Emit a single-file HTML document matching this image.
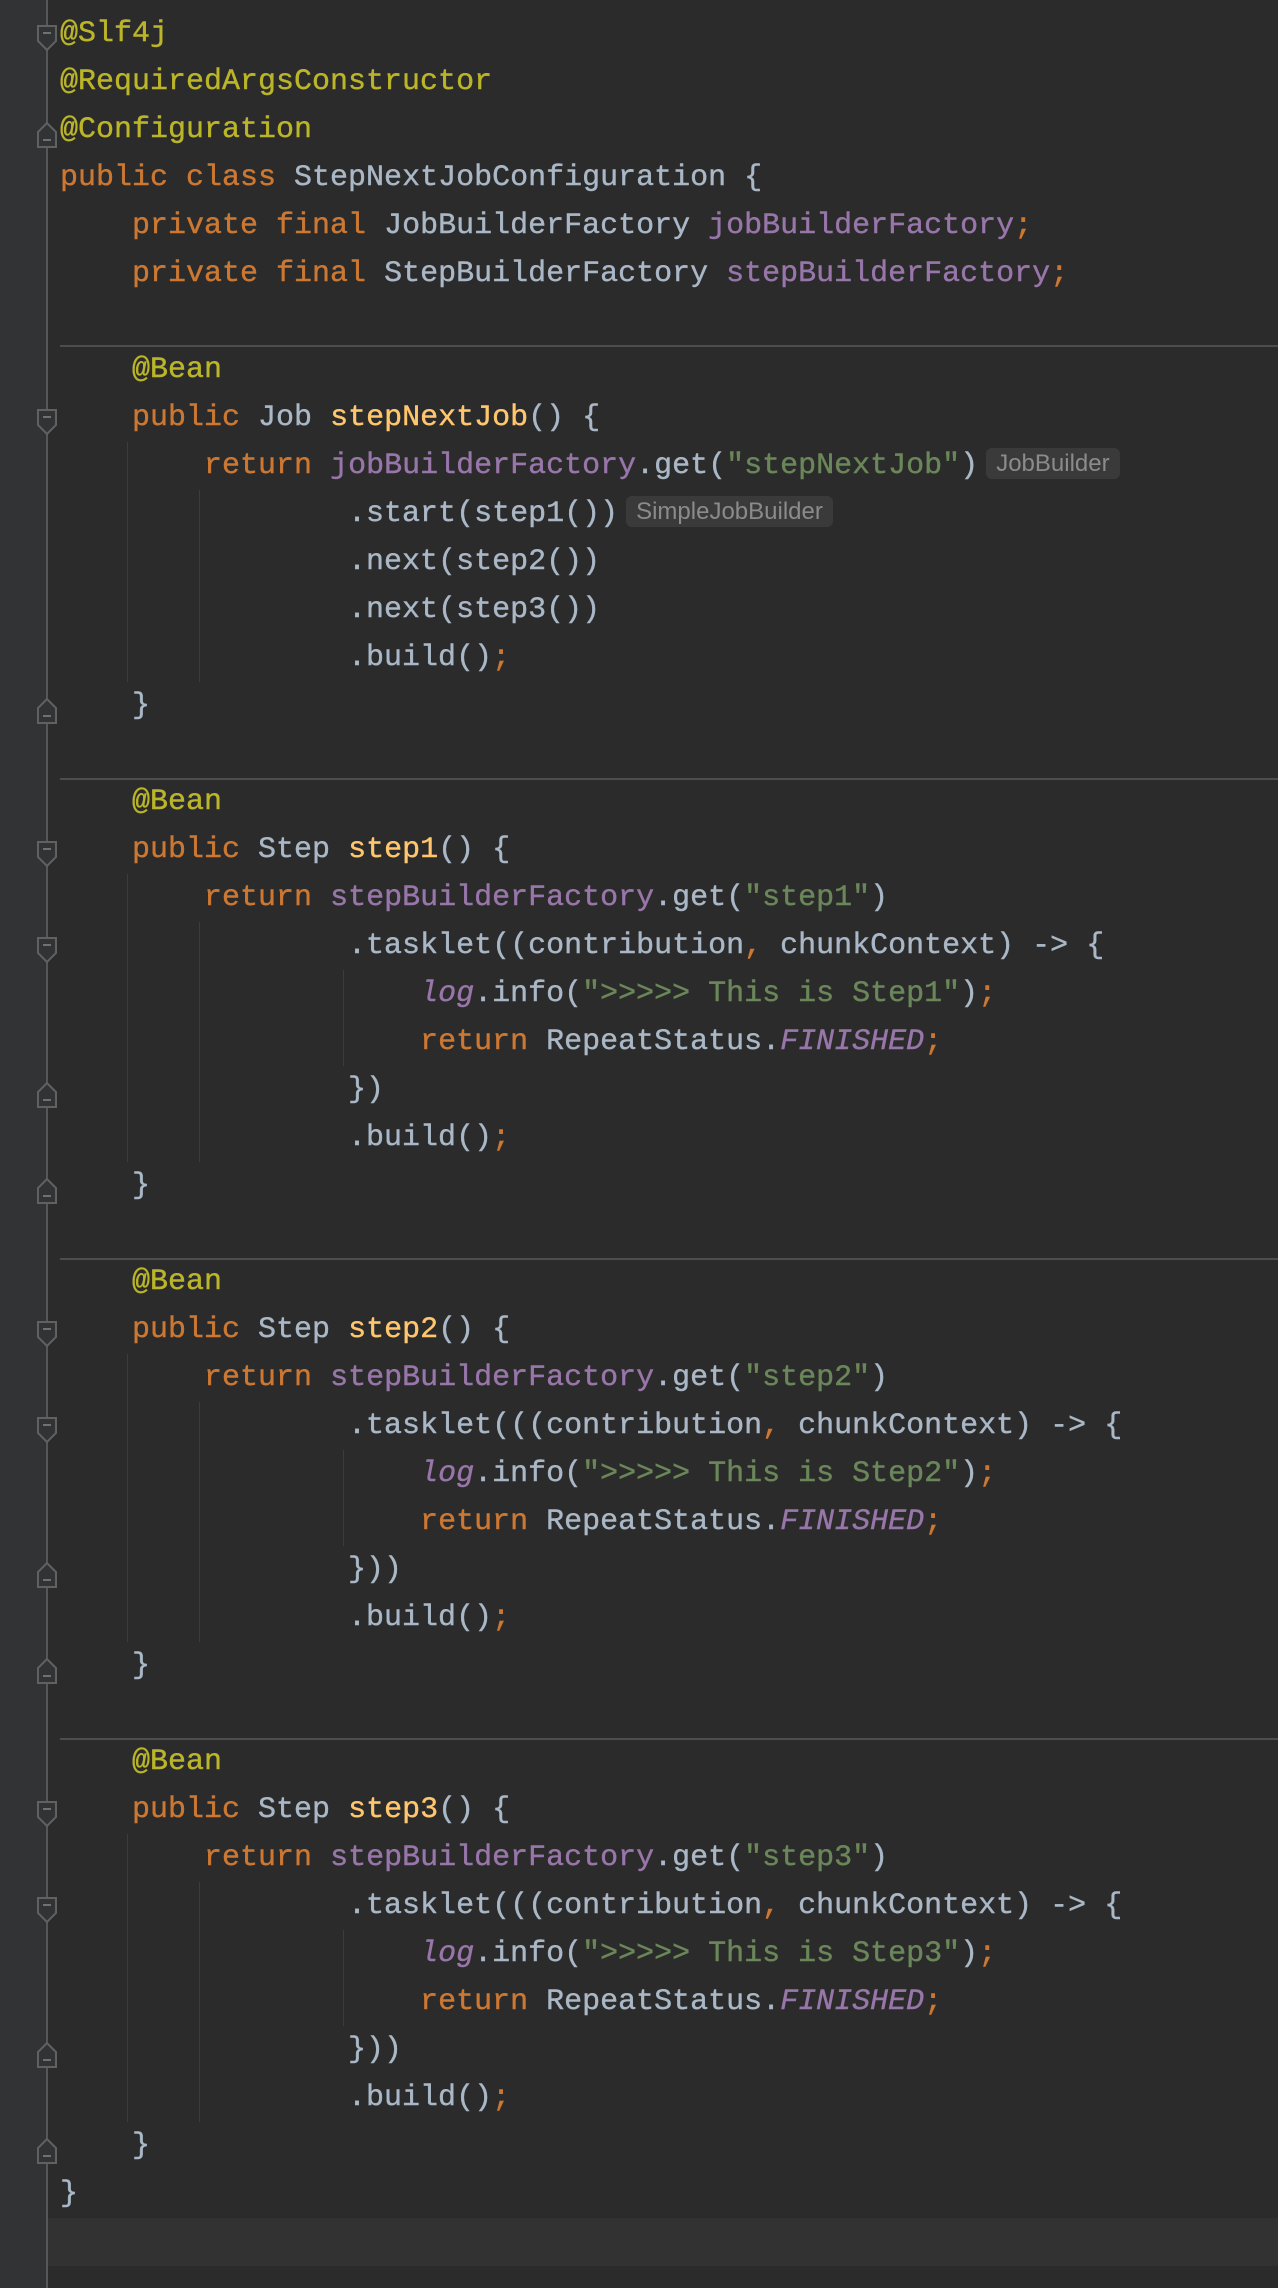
<!DOCTYPE html>
<html><head><meta charset="utf-8"><style>
html,body{margin:0;padding:0}
body{width:1278px;height:2288px;background:#2b2b2b;position:relative;overflow:hidden;font-family:"Liberation Mono",monospace;font-size:30px}
.g{position:absolute;left:0;top:0;width:46px;height:2288px;background:#313335}
.gl{position:absolute;left:46px;top:0;width:2px;height:2288px;background:#555759}
.l{position:absolute;left:60px;height:48px;line-height:48px;white-space:pre;color:#a9b7c6;-webkit-text-stroke:0.4px currentColor}
.k{color:#cc7832}.a{color:#bbb529}.f{color:#9876aa}.m{color:#ffc66d}.s{color:#6a8759}.i{font-style:italic;color:#9876aa}
.sep{position:absolute;left:60px;right:0;height:2px;background:#4d4d4d}
.ig{position:absolute;width:1px;background:#3c3c3c}
.h{display:inline-block;font-family:"Liberation Sans",sans-serif;font-size:24px;color:#8b8b8b;background:#3a3a3a;border-radius:6px;padding:0 10px;line-height:31px;vertical-align:2px;margin-left:8px;-webkit-text-stroke:0}
.cur{position:absolute;left:48px;right:0;top:2218px;height:48px;background:#323232}
</style></head><body>
<div class="g"></div>
<div class="cur"></div>
<div class="gl"></div>
<div class="sep" style="top:345px"></div>
<div class="sep" style="top:778px"></div>
<div class="sep" style="top:1258px"></div>
<div class="sep" style="top:1738px"></div>
<div class="ig" style="left:127px;top:442px;height:240px"></div>
<div class="ig" style="left:199px;top:490px;height:192px"></div>
<div class="ig" style="left:127px;top:874px;height:288px"></div>
<div class="ig" style="left:199px;top:922px;height:240px"></div>
<div class="ig" style="left:343px;top:970px;height:96px"></div>
<div class="ig" style="left:127px;top:1354px;height:288px"></div>
<div class="ig" style="left:199px;top:1402px;height:240px"></div>
<div class="ig" style="left:343px;top:1450px;height:96px"></div>
<div class="ig" style="left:127px;top:1834px;height:288px"></div>
<div class="ig" style="left:199px;top:1882px;height:240px"></div>
<div class="ig" style="left:343px;top:1930px;height:96px"></div>
<svg width="70" height="2288" style="position:absolute;left:0;top:0">
<defs>
<g id="s"><path d="M-9,-8 H9 V7 L0,16 L-9,7 Z" fill="#313335" stroke="#5f6163" stroke-width="2"/><path d="M-4,-1 H4" stroke="#6f7173" stroke-width="2"/></g>
<g id="e"><path d="M-9,17 H9 V2 L0,-7 L-9,2 Z" fill="#313335" stroke="#5f6163" stroke-width="2"/><path d="M-4,10 H4" stroke="#6f7173" stroke-width="2"/></g>
</defs>
<use href="#s" x="47" y="34"/><use href="#e" x="47" y="130"/>
<use href="#s" x="47" y="418"/><use href="#e" x="47" y="706"/>
<use href="#s" x="47" y="850"/><use href="#s" x="47" y="946"/><use href="#e" x="47" y="1090"/><use href="#e" x="47" y="1186"/>
<use href="#s" x="47" y="1330"/><use href="#s" x="47" y="1426"/><use href="#e" x="47" y="1570"/><use href="#e" x="47" y="1666"/>
<use href="#s" x="47" y="1810"/><use href="#s" x="47" y="1906"/><use href="#e" x="47" y="2050"/><use href="#e" x="47" y="2146"/>
</svg>
<div class="l a" style="top:10px">@Slf4j</div>
<div class="l a" style="top:58px">@RequiredArgsConstructor</div>
<div class="l a" style="top:106px">@Configuration</div>
<div class="l" style="top:154px"><span class="k">public class </span>StepNextJobConfiguration {</div>
<div class="l" style="top:202px">    <span class="k">private final </span>JobBuilderFactory <span class="f">jobBuilderFactory</span><span class="k">;</span></div>
<div class="l" style="top:250px">    <span class="k">private final </span>StepBuilderFactory <span class="f">stepBuilderFactory</span><span class="k">;</span></div>

<div class="l" style="top:346px">    <span class="a">@Bean</span></div>
<div class="l" style="top:394px">    <span class="k">public </span>Job <span class="m">stepNextJob</span>() {</div>
<div class="l" style="top:442px">        <span class="k">return </span><span class="f">jobBuilderFactory</span>.get(<span class="s">"stepNextJob"</span>)<span class="h">JobBuilder</span></div>
<div class="l" style="top:490px">                .start(step1())<span class="h">SimpleJobBuilder</span></div>
<div class="l" style="top:538px">                .next(step2())</div>
<div class="l" style="top:586px">                .next(step3())</div>
<div class="l" style="top:634px">                .build()<span class="k">;</span></div>
<div class="l" style="top:682px">    }</div>

<div class="l" style="top:778px">    <span class="a">@Bean</span></div>
<div class="l" style="top:826px">    <span class="k">public </span>Step <span class="m">step1</span>() {</div>
<div class="l" style="top:874px">        <span class="k">return </span><span class="f">stepBuilderFactory</span>.get(<span class="s">"step1"</span>)</div>
<div class="l" style="top:922px">                .tasklet((contribution<span class="k">, </span>chunkContext) -&gt; {</div>
<div class="l" style="top:970px">                    <span class="i">log</span>.info(<span class="s">"&gt;&gt;&gt;&gt;&gt; This is Step1"</span>)<span class="k">;</span></div>
<div class="l" style="top:1018px">                    <span class="k">return </span>RepeatStatus.<span class="i">FINISHED</span><span class="k">;</span></div>
<div class="l" style="top:1066px">                })</div>
<div class="l" style="top:1114px">                .build()<span class="k">;</span></div>
<div class="l" style="top:1162px">    }</div>

<div class="l" style="top:1258px">    <span class="a">@Bean</span></div>
<div class="l" style="top:1306px">    <span class="k">public </span>Step <span class="m">step2</span>() {</div>
<div class="l" style="top:1354px">        <span class="k">return </span><span class="f">stepBuilderFactory</span>.get(<span class="s">"step2"</span>)</div>
<div class="l" style="top:1402px">                .tasklet(((contribution<span class="k">, </span>chunkContext) -&gt; {</div>
<div class="l" style="top:1450px">                    <span class="i">log</span>.info(<span class="s">"&gt;&gt;&gt;&gt;&gt; This is Step2"</span>)<span class="k">;</span></div>
<div class="l" style="top:1498px">                    <span class="k">return </span>RepeatStatus.<span class="i">FINISHED</span><span class="k">;</span></div>
<div class="l" style="top:1546px">                }))</div>
<div class="l" style="top:1594px">                .build()<span class="k">;</span></div>
<div class="l" style="top:1642px">    }</div>

<div class="l" style="top:1738px">    <span class="a">@Bean</span></div>
<div class="l" style="top:1786px">    <span class="k">public </span>Step <span class="m">step3</span>() {</div>
<div class="l" style="top:1834px">        <span class="k">return </span><span class="f">stepBuilderFactory</span>.get(<span class="s">"step3"</span>)</div>
<div class="l" style="top:1882px">                .tasklet(((contribution<span class="k">, </span>chunkContext) -&gt; {</div>
<div class="l" style="top:1930px">                    <span class="i">log</span>.info(<span class="s">"&gt;&gt;&gt;&gt;&gt; This is Step3"</span>)<span class="k">;</span></div>
<div class="l" style="top:1978px">                    <span class="k">return </span>RepeatStatus.<span class="i">FINISHED</span><span class="k">;</span></div>
<div class="l" style="top:2026px">                }))</div>
<div class="l" style="top:2074px">                .build()<span class="k">;</span></div>
<div class="l" style="top:2122px">    }</div>
<div class="l" style="top:2170px">}</div>
</body></html>
